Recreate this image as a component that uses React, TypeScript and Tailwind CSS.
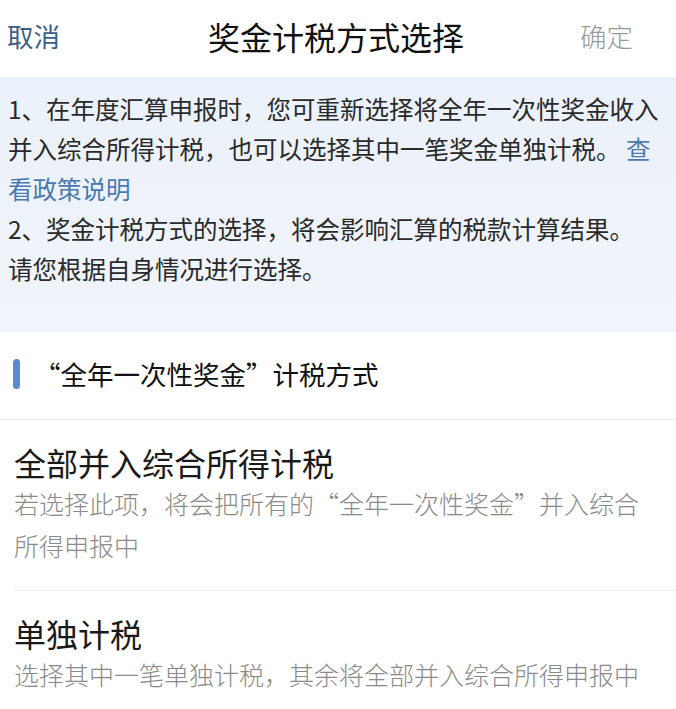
import React from "react";

const FONT = { fontFamily: '"Noto Sans CJK SC", "Noto Sans", sans-serif' };

export default function App() {
  return (
    <div className="w-[676px] min-h-[709px] bg-white text-[#222]" style={FONT}>
      {/* Header */}
      <div className="flex h-[77px] items-center bg-white pl-[7px] pr-[43px] pb-[5px]">
        <span className="text-[26.5px] text-[#3b5f88]">取消</span>
        <span className="ml-[148px] text-[32px] text-[#111]">奖金计税方式选择</span>
        <span className="ml-auto text-[26.5px] font-light text-[#9a9a9a]">确定</span>
      </div>

      {/* Info */}
      <div className="bg-gradient-to-b from-[#ebf1fa] to-[#f1f4fa] pl-[8px] pr-[6px] pt-[12px] pb-[43px] text-[24.5px] leading-[40px] text-[#2a2a2a]">
        <p>
          1、在年度汇算申报时，您可重新选择将全年一次性奖金收入并入综合所得计税，也可以选择其中一笔奖金单独计税。{" "}
          <span className="text-[#4a7ab0]">查看政策说明</span>
        </p>
        <p>
          2、奖金计税方式的选择，将会影响汇算的税款计算结果。
          <br />
          请您根据自身情况进行选择。
        </p>
      </div>

      {/* Section header */}
      <div className="flex h-[88px] items-center gap-[14px] border-b border-[#ececec] pl-[13px] pb-[4px]">
        <span className="h-[30px] w-[7px] rounded-full bg-[#5b8ad2]" />
        <span className="text-[26.5px] text-[#111]">“全年一次性奖金”计税方式</span>
      </div>

      {/* Option 1 */}
      <div className="pl-[14px] pt-[22px] pb-[24px]">
        <div className="text-[32px] leading-[40px] text-[#1a1a1a]">全部并入综合所得计税</div>
        <div className="text-[25px] leading-[42px] font-light text-[#8a8a8a]">
          若选择此项，将会把所有的“全年一次性奖金”并入综合
          <br />
          所得申报中
        </div>
      </div>
      <div className="ml-[13px] h-px bg-[#ececec]" />

      {/* Option 2 */}
      <div className="pl-[14px] pt-[22px] pb-[24px]">
        <div className="text-[32px] leading-[40px] text-[#1a1a1a]">单独计税</div>
        <div className="text-[25px] leading-[42px] font-light text-[#8a8a8a]">
          选择其中一笔单独计税，其余将全部并入综合所得申报中
        </div>
      </div>
    </div>
  );
}
